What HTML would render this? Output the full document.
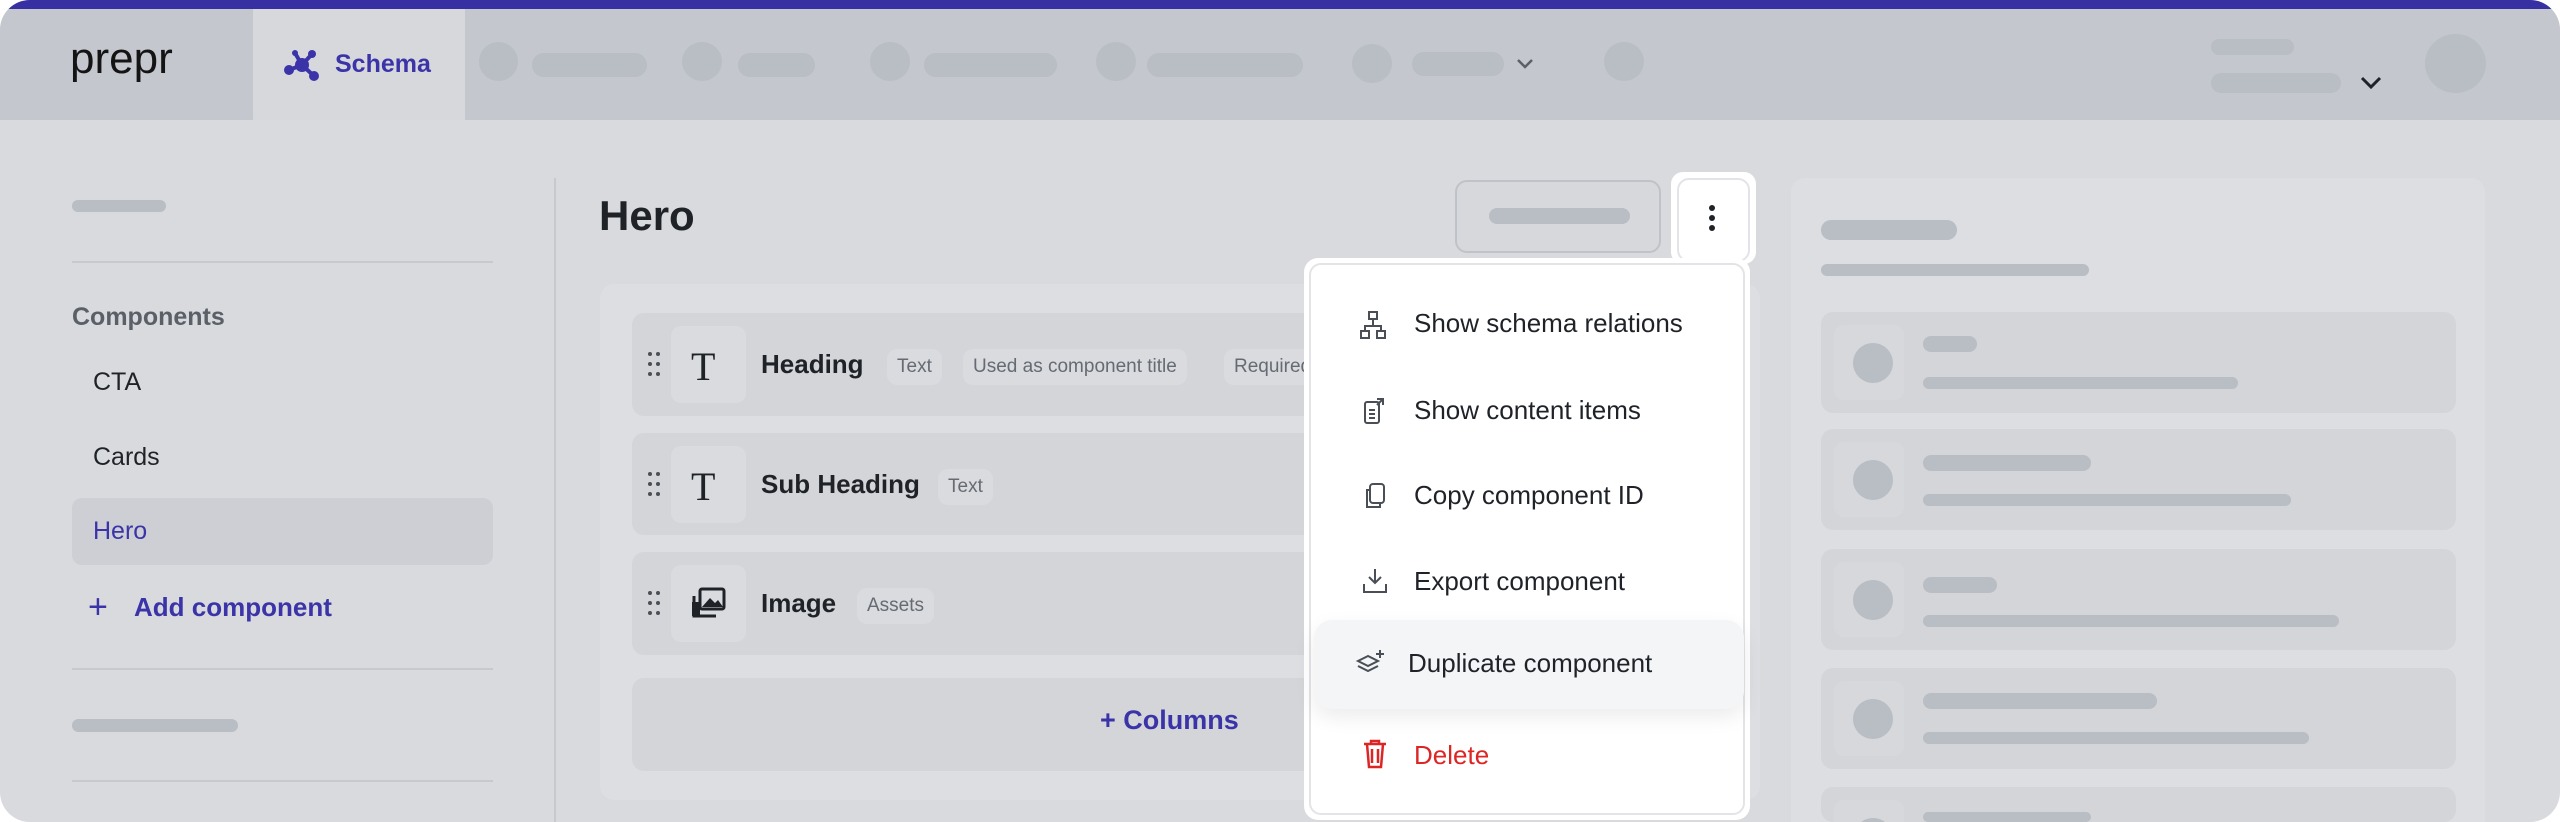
<!DOCTYPE html>
<html><head><meta charset="utf-8"><style>
*{box-sizing:border-box;margin:0;padding:0}
html,body{width:2560px;height:822px;background:#fff;overflow:hidden;font-family:"Liberation Sans",sans-serif}
#pg{position:absolute;left:0;top:0;width:2560px;height:822px;background:#d8dadd;border-radius:30px;overflow:hidden}
.a{position:absolute}
.pl{position:absolute;background:#b9bdc4;border-radius:14px}
.ci{position:absolute;background:#b9bdc4;border-radius:50%}
.row{position:absolute;left:632px;width:1110px;background:#d3d5d9;border-radius:12px}
.ib{position:absolute;left:39px;top:13px;width:75px;height:77px;background:#d9dbde;border-radius:10px}
.tag{position:absolute;background:#d9dbde;border-radius:10px;color:#666b73;font-size:19px;padding:7px 10px;white-space:nowrap}
.nm{position:absolute;left:129px;font-weight:bold;font-size:26px;color:#1f2328}
.mi{position:absolute;left:1414px;font-size:26px;color:#1f2328}
.card{position:absolute;left:1821px;width:635px;height:101px;background:#d3d5d9;border-radius:12px}
.card .sq{position:absolute;left:13px;top:13px;width:70px;height:75px;background:#d6d8db;border-radius:10px}
.card .c{position:absolute;left:32px;top:31px;width:40px;height:40px;border-radius:50%;background:#b9bdc4}
.dh{position:absolute;left:15px;top:38px}
</style></head><body><div id="pg">
<div class="a" style="left:0;top:0;width:2560px;height:9px;background:#3730a3"></div>
<div class="a" style="left:0;top:9px;width:2560px;height:111px;background:#c4c7cd"></div>
<div class="a" style="left:70px;top:34px;font-size:44px;font-weight:normal;color:#141414;letter-spacing:0px">prepr</div>
<div class="a" style="left:253px;top:9px;width:212px;height:111px;background:#d6d8dc"></div>
<svg class="a" style="left:282px;top:48px" width="40" height="34" viewBox="0 0 40 34"><g fill="#3b34a8"><circle cx="20" cy="17" r="7"/><circle cx="7" cy="22" r="5"/><circle cx="30" cy="6" r="4"/><circle cx="32" cy="28" r="5"/><circle cx="13" cy="5" r="3"/></g><g stroke="#3b34a8" stroke-width="4"><line x1="20" y1="17" x2="7" y2="22"/><line x1="20" y1="17" x2="30" y2="6"/><line x1="20" y1="17" x2="32" y2="28"/><line x1="20" y1="17" x2="13" y2="5"/></g></svg>
<div class="a" style="left:335px;top:50px;font-size:25px;font-weight:bold;color:#3b34a8">Schema</div>
<div class="ci" style="left:479px;top:42px;width:39px;height:39px"></div><div class="pl" style="left:532px;top:53px;width:115px;height:24px"></div>
<div class="ci" style="left:682px;top:42px;width:40px;height:39px"></div><div class="pl" style="left:738px;top:53px;width:77px;height:24px"></div>
<div class="ci" style="left:870px;top:42px;width:40px;height:39px"></div><div class="pl" style="left:924px;top:53px;width:133px;height:24px"></div>
<div class="ci" style="left:1096px;top:42px;width:40px;height:39px"></div><div class="pl" style="left:1147px;top:53px;width:156px;height:24px"></div>
<div class="ci" style="left:1352px;top:44px;width:40px;height:39px"></div><div class="pl" style="left:1412px;top:52px;width:92px;height:24px"></div>
<svg class="a" style="left:1516px;top:58px" width="18" height="12"><path d="M2 2l7 7 7-7" stroke="#5b6068" stroke-width="2.5" fill="none"/></svg>
<div class="ci" style="left:1604px;top:42px;width:40px;height:39px"></div>
<div class="pl" style="left:2211px;top:39px;width:83px;height:16px"></div>
<div class="pl" style="left:2211px;top:73px;width:130px;height:20px"></div>
<svg class="a" style="left:2360px;top:76px" width="22" height="14"><path d="M2 2l9 9 9-9" stroke="#1f2328" stroke-width="3" fill="none"/></svg>
<div class="ci" style="left:2425px;top:34px;width:61px;height:59px"></div>

<div class="pl" style="left:72px;top:200px;width:94px;height:12px"></div>
<div class="a" style="left:72px;top:261px;width:421px;height:2px;background:#c7c9ce"></div>
<div class="a" style="left:72px;top:303px;font-size:25px;font-weight:bold;color:#5b6068">Components</div>
<div class="a" style="left:93px;top:368px;font-size:25px;color:#1f2328">CTA</div>
<div class="a" style="left:93px;top:443px;font-size:25px;color:#1f2328">Cards</div>
<div class="a" style="left:72px;top:498px;width:421px;height:67px;background:#cdcfd4;border-radius:10px"></div>
<div class="a" style="left:93px;top:517px;font-size:25px;color:#3b34a8">Hero</div>
<div class="a" style="left:88px;top:588px;font-size:34px;color:#3b34a8">+</div>
<div class="a" style="left:134px;top:592px;font-size:26px;font-weight:bold;color:#3b34a8">Add component</div>
<div class="a" style="left:72px;top:668px;width:421px;height:2px;background:#c7c9ce"></div>
<div class="pl" style="left:72px;top:719px;width:166px;height:13px"></div>
<div class="a" style="left:72px;top:780px;width:421px;height:2px;background:#c7c9ce"></div>
<div class="a" style="left:554px;top:178px;width:2px;height:650px;background:#c7c9ce"></div>

<div class="a" style="left:599px;top:192px;font-size:42px;font-weight:bold;color:#1f2328">Hero</div>
<div class="a" style="left:600px;top:284px;width:1160px;height:516px;background:#dcdee1;border-radius:14px"></div>
<div class="row" style="top:313px;height:103px"><svg class="dh" width="14" height="26"><g fill="#4a4f57"><circle cx="3" cy="3" r="2"/><circle cx="11" cy="3" r="2"/><circle cx="3" cy="13" r="2"/><circle cx="11" cy="13" r="2"/><circle cx="3" cy="23" r="2"/><circle cx="11" cy="23" r="2"/></g></svg><div class="ib"></div><div class="a" style="left:59px;top:30px;font-family:'Liberation Serif',serif;font-size:40px;color:#1f2328">T</div><div class="nm" style="top:36px">Heading</div><div class="tag" style="left:255px;top:36px">Text</div><div class="tag" style="left:331px;top:36px">Used as component title</div><div class="tag" style="left:592px;top:36px">Required</div></div>
<div class="row" style="top:433px;height:102px"><svg class="dh" width="14" height="26"><g fill="#4a4f57"><circle cx="3" cy="3" r="2"/><circle cx="11" cy="3" r="2"/><circle cx="3" cy="13" r="2"/><circle cx="11" cy="13" r="2"/><circle cx="3" cy="23" r="2"/><circle cx="11" cy="23" r="2"/></g></svg><div class="ib"></div><div class="a" style="left:59px;top:30px;font-family:'Liberation Serif',serif;font-size:40px;color:#1f2328">T</div><div class="nm" style="top:36px">Sub Heading</div><div class="tag" style="left:306px;top:36px">Text</div></div>
<div class="row" style="top:552px;height:103px"><svg class="dh" width="14" height="26"><g fill="#4a4f57"><circle cx="3" cy="3" r="2"/><circle cx="11" cy="3" r="2"/><circle cx="3" cy="13" r="2"/><circle cx="11" cy="13" r="2"/><circle cx="3" cy="23" r="2"/><circle cx="11" cy="23" r="2"/></g></svg><div class="ib"></div><svg class="a" style="left:58px;top:34px" width="38" height="34" viewBox="0 0 38 34"><rect x="10" y="3" width="24" height="20" rx="2" fill="none" stroke="#1f2328" stroke-width="3"/><path d="M12 21l8-9 5 5 3-3 5 7z" fill="#1f2328"/><path d="M4 10v20h22" stroke="#1f2328" stroke-width="3" fill="none"/><rect x="2" y="16" width="8" height="14" fill="#1f2328"/></svg><div class="nm" style="top:36px">Image</div><div class="tag" style="left:225px;top:36px">Assets</div></div>
<div class="row" style="top:678px;height:93px"><div class="a" style="left:468px;top:27px;font-size:27px;font-weight:bold;color:#3b34a8">+ Columns</div></div>

<div class="a" style="left:1455px;top:180px;width:206px;height:73px;border:2px solid #bfc2c8;border-radius:12px;background:#d6d8dc"></div>
<div class="pl" style="left:1489px;top:208px;width:141px;height:16px"></div>
<div class="a" style="left:1671px;top:172px;width:85px;height:92px;background:#fff;border-radius:12px"></div>
<div class="a" style="left:1677px;top:178px;width:73px;height:84px;border:2px solid #e2e4e8;border-radius:12px;background:#fff"></div>
<svg class="a" style="left:1706px;top:204px" width="12" height="32"><circle cx="6" cy="4" r="3" fill="#1f2328"/><circle cx="6" cy="14" r="3" fill="#1f2328"/><circle cx="6" cy="24" r="3" fill="#1f2328"/></svg>

<div class="a" style="left:1791px;top:178px;width:694px;height:660px;background:#dcdee1;border-radius:14px"></div>
<div class="pl" style="left:1821px;top:220px;width:136px;height:20px"></div>
<div class="pl" style="left:1821px;top:264px;width:268px;height:12px"></div>
<div class="card" style="top:312px"><div class="sq"></div><div class="c"></div><div class="pl" style="left:102px;top:24px;width:54px;height:16px"></div><div class="pl" style="left:102px;top:65px;width:315px;height:12px"></div></div>
<div class="card" style="top:429px"><div class="sq"></div><div class="c"></div><div class="pl" style="left:102px;top:26px;width:168px;height:16px"></div><div class="pl" style="left:102px;top:65px;width:368px;height:12px"></div></div>
<div class="card" style="top:549px"><div class="sq"></div><div class="c"></div><div class="pl" style="left:102px;top:28px;width:74px;height:16px"></div><div class="pl" style="left:102px;top:66px;width:416px;height:12px"></div></div>
<div class="card" style="top:668px"><div class="sq"></div><div class="c"></div><div class="pl" style="left:102px;top:25px;width:234px;height:16px"></div><div class="pl" style="left:102px;top:64px;width:386px;height:12px"></div></div>
<div class="card" style="top:787px;height:35px"><div class="sq"></div><div class="c"></div><div class="pl" style="left:102px;top:25px;width:168px;height:10px"></div></div>

<div class="a" style="left:1304px;top:258px;width:446px;height:562px;background:#fff;border-radius:14px"></div>
<div class="a" style="left:1309px;top:263px;width:436px;height:552px;border:2px solid #e2e4e8;border-radius:12px;background:#fff"></div>
<svg class="a" style="left:1358px;top:310px" width="30" height="30" viewBox="0 0 30 30" fill="none" stroke="#4a4f57" stroke-width="2"><rect x="11" y="2" width="8" height="7"/><rect x="3" y="21" width="8" height="7"/><rect x="19" y="21" width="8" height="7"/><path d="M15 9v6M7 21v-5h16v5"/></svg>
<div class="mi" style="top:308px">Show schema relations</div>
<svg class="a" style="left:1362px;top:396px" width="24" height="30" viewBox="0 0 24 30" fill="none" stroke="#4a4f57" stroke-width="2"><rect x="3" y="6" width="14" height="21" rx="2"/><path d="M7 14h6M7 18h6M7 22h6M15 3h6v6M21 3l-6 6"/></svg>
<div class="mi" style="top:395px">Show content items</div>
<svg class="a" style="left:1362px;top:481px" width="26" height="30" viewBox="0 0 26 30" fill="none" stroke="#4a4f57" stroke-width="2"><rect x="8" y="3" width="14" height="19" rx="3"/><path d="M8 9H5v17h13v-4"/></svg>
<div class="mi" style="top:480px">Copy component ID</div>
<svg class="a" style="left:1360px;top:566px" width="30" height="30" viewBox="0 0 30 30" fill="none" stroke="#4a4f57" stroke-width="2"><path d="M15 3v14M9 11l6 6 6-6M4 18v8h22v-8"/></svg>
<div class="mi" style="top:566px">Export component</div>
<div class="a" style="left:1314px;top:620px;width:430px;height:89px;background:#f4f5f7;border-radius:18px;box-shadow:0 8px 20px rgba(0,0,0,.08)"></div>
<svg class="a" style="left:1354px;top:648px" width="32" height="30" viewBox="0 0 32 30" fill="none" stroke="#4a4f57" stroke-width="2"><path d="M14 8L4 13l10 5 10-5z M4 18l10 5 10-5 M26 2v8M22 6h8"/></svg>
<div class="mi" style="left:1408px;top:648px">Duplicate component</div>
<svg class="a" style="left:1362px;top:738px" width="26" height="32" viewBox="0 0 26 32" fill="none" stroke="#dc2626" stroke-width="2.5"><path d="M2 6h22M9 6V3h8v3M5 6l2 23h12l2-23M10 11v14M16 11v14"/></svg>
<div class="mi" style="top:740px;color:#dc2626">Delete</div>
</div></body></html>
